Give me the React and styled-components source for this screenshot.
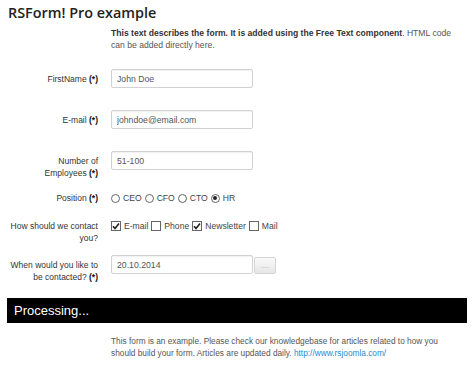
import styled, { createGlobalStyle } from "styled-components";

const GlobalStyle = createGlobalStyle`
  body {
    margin: 0;
    background: #fff;
    font-family: Arial, "Liberation Sans", sans-serif;
    color: #333;
  }
`;

function Radio({ checked, children }) {
  return (
    <Choice>
      <RadioMark checked={checked} />
      {children}
    </Choice>
  );
}

function Check({ checked, children }) {
  return (
    <Choice>
      <CheckMark>
        {checked && (
          <svg width="8" height="8" viewBox="0 0 8 8">
            <path d="M1 4.2 L3 6.4 L7 1.4" fill="none" stroke="#222" strokeWidth="1.6" />
          </svg>
        )}
      </CheckMark>
      {children}
    </Choice>
  );
}

export default function App() {
  return (
    <Page>
      <GlobalStyle />
      <Title>RSForm! Pro example</Title>
      <Intro>
        <b>This text describes the form. It is added using the Free Text component</b>. HTML code
        can be added directly here.
      </Intro>

      <Form>
        <Row gap="22px">
          <Label>
            FirstName <b>(*)</b>
          </Label>
          <Input defaultValue="John Doe" />
        </Row>
        <Row gap="22px">
          <Label>
            E-mail <b>(*)</b>
          </Label>
          <Input defaultValue="johndoe@email.com" />
        </Row>
        <Row gap="13px">
          <Label>
            Number of
            <br />
            Employees <b>(*)</b>
          </Label>
          <Input defaultValue="51-100" />
        </Row>
        <Row gap="16px">
          <Label flat>
            Position <b>(*)</b>
          </Label>
          <Choices>
            <Radio>CEO</Radio>
            <Radio>CFO</Radio>
            <Radio>CTO</Radio>
            <Radio checked>HR</Radio>
          </Choices>
        </Row>
        <Row gap="11px">
          <Label flat>
            How should we contact
            <br />
            you?
          </Label>
          <Choices>
            <Check checked>E-mail</Check>
            <Check>Phone</Check>
            <Check checked>Newsletter</Check>
            <Check>Mail</Check>
          </Choices>
        </Row>
        <Row gap="0">
          <Label>
            When would you like to
            <br />
            be contacted? <b>(*)</b>
          </Label>
          <DateField>
            <Input defaultValue="20.10.2014" />
            <PickButton>....</PickButton>
          </DateField>
        </Row>
      </Form>

      <Banner>Processing...</Banner>

      <Footer>
        This form is an example. Please check our knowledgebase for articles related to how you
        should build your form. Articles are updated daily.{" "}
        <FooterLink href="#">http://www.rsjoomla.com/</FooterLink>
      </Footer>
    </Page>
  );
}

const Page = styled.div`
  width: 474px;
  height: 375px;
  overflow: hidden;
  padding: 0 7px;
  box-sizing: border-box;
`;

const Title = styled.h1`
  margin: 0;
  padding: 3px 0 0 1px;
  font-family: "Open Sans", sans-serif;
  font-size: 14.4px;
  font-weight: 600;
  line-height: 20px;
  color: #222;
`;

const Intro = styled.p`
  margin: 5px 0 0 104px;
  width: 345px;
  font-size: 8.6px;
  line-height: 11.5px;
  color: #555;

  b {
    color: #333;
  }
`;

const Form = styled.div`
  margin-top: 18px;
`;

const Row = styled.div`
  display: grid;
  grid-template-columns: 91px 1fr;
  column-gap: 13px;
  align-items: start;
  margin-bottom: ${(p) => p.gap};
`;

const Label = styled.div`
  text-align: right;
  white-space: nowrap;
  font-size: 8.5px;
  line-height: 12px;
  color: #333;
  padding-top: ${(p) => (p.flat ? "0" : "4px")};

  b {
    color: #111;
  }
`;

const Input = styled.input`
  width: 142px;
  height: 19px;
  box-sizing: border-box;
  border: 1px solid #d2d2d2;
  border-radius: 2px;
  box-shadow: inset 0 1px 1px rgba(0, 0, 0, 0.06);
  padding: 0 5px;
  font-family: Arial, "Liberation Sans", sans-serif;
  font-size: 8.7px;
  color: #555;
  outline: none;
`;

const Choices = styled.div`
  display: flex;
  align-items: center;
  gap: 3px;
  font-size: 8.6px;
  line-height: 12px;
  color: #444;
`;

const Choice = styled.label`
  display: inline-flex;
  align-items: center;
  gap: 3px;
`;

const RadioMark = styled.span`
  width: 7px;
  height: 7px;
  border: 1px solid #666;
  border-radius: 50%;
  position: relative;
  display: inline-block;

  &::after {
    content: "";
    display: ${(p) => (p.checked ? "block" : "none")};
    position: absolute;
    inset: 1.5px;
    border-radius: 50%;
    background: #222;
  }
`;

const CheckMark = styled.span`
  width: 8px;
  height: 8px;
  border: 1px solid #666;
  display: inline-flex;
  align-items: center;
  justify-content: center;
  background: #fff;
`;

const DateField = styled.div`
  display: flex;
  align-items: center;
  gap: 1px;
`;

const PickButton = styled.button`
  width: 22px;
  height: 17px;
  margin-top: 2px;
  padding: 0;
  border: 1px solid #d4d4d4;
  border-radius: 2px;
  background: linear-gradient(#fafafa, #e6e6e6);
  color: #aaa;
  font-size: 7px;
  line-height: 10px;
`;

const Banner = styled.div`
  margin-top: 15px;
  height: 25px;
  background: #000;
  color: #fff;
  font-size: 13px;
  line-height: 25px;
  padding-left: 7px;
`;

const Footer = styled.p`
  margin: 13px 0 0 104px;
  width: 345px;
  font-size: 8.3px;
  line-height: 11.5px;
  color: #555;
`;

const FooterLink = styled.a`
  color: #1e8bd0;
  text-decoration: none;
`;
